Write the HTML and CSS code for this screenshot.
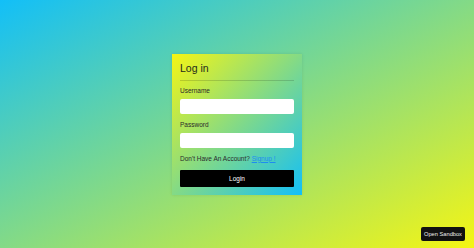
FILE: index.html
```html
<!DOCTYPE html>
<html lang="en">
	<head>
		<meta charset="utf-8">
		<meta name="viewport" content="width=device-width, initial-scale=1.0">
		<title>Log in</title>
		<link rel="stylesheet" href="styles.css">
	</head>
	<body>
		<main class="page">
			<form class="card">
				<h1 class="card-title">Log in</h1>
				<label class="field-label" for="username">Username</label>
				<input class="field-input" id="username" type="text">
				<label class="field-label" for="password">Password</label>
				<input class="field-input" id="password" type="password">
				<p class="signup">Don't Have An Account? <a href="#">Signup !</a></p>
				<button class="login-btn" type="button">Login</button>
			</form>
		</main>
		<a class="sandbox-btn" href="#">Open Sandbox</a>
	</body>
</html>
```

FILE: styles.css
```css
html, body {
	margin: 0;
	height: 100%;
}

body {
	font-family: 'Liberation Sans', Arial, sans-serif;
	background: linear-gradient(to bottom right, #12bff8, #f5f514);
	color: #222;
}

.page {
	height: 100%;
	display: flex;
	align-items: center;
	justify-content: center;
}

.card {
	width: 130px;
	box-sizing: border-box;
	padding: 7px 8px 8px;
	display: flex;
	flex-direction: column;
	background: linear-gradient(to bottom right, #f5f514, #12bff8);
	box-shadow: 0 0 3px rgba(0, 0, 0, 0.1);
}

.card-title {
	margin: 0;
	padding-bottom: 5px;
	border-bottom: 1px solid rgba(0, 0, 0, 0.15);
	font-size: 10.5px;
	line-height: 14px;
	font-weight: 400;
	color: #1f2a1a;
}

.field-label {
	margin-top: 5px;
	font-size: 6.5px;
	line-height: 10px;
	color: #2b2b2b;
}

.field-input {
	margin-top: 3px;
	height: 15px;
	box-sizing: border-box;
	border: none;
	border-radius: 2px;
	background: #fff;
	padding: 0 4px;
}

.field-input + .field-label {
	margin-top: 6px;
}

.signup {
	margin: 6px 0 0;
	font-size: 6.5px;
	line-height: 10px;
	color: #2b2b2b;
}

.signup a {
	color: #1e8cf0;
}

.login-btn {
	margin-top: 6px;
	height: 17px;
	border: none;
	border-radius: 1px;
	background: #000;
	color: #fff;
	font-family: inherit;
	font-size: 6.5px;
	font-weight: 400;
	padding: 0;
}

.sandbox-btn {
	position: fixed;
	right: 9px;
	bottom: 7px;
	width: 44px;
	height: 14px;
	display: flex;
	align-items: center;
	justify-content: center;
	background: #111;
	border-radius: 2px;
	color: #eee;
	font-size: 5.7px;
	text-decoration: none;
}
```
